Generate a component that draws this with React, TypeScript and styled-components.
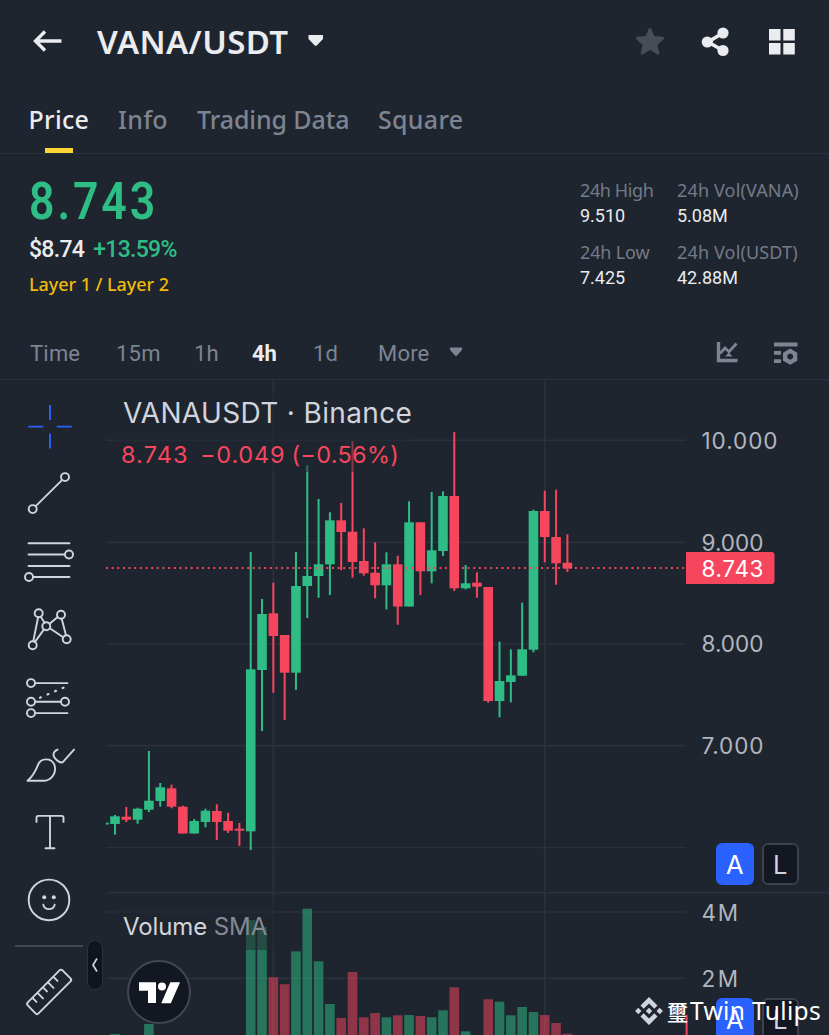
import React from "react";
import styled, { createGlobalStyle } from "styled-components";

const C = {
  bg: "#1f252f",
  line: "#2b313c",
  text: "#eaecef",
  muted: "#7d8492",
  dim: "#747a87",
  axis: "#b2b5be",
  green: "#2ebd85",
  red: "#f6465d",
  yellow: "#fcd535",
  gold: "#f0b90b",
  blue: "#2962ff",
  dark: "#131722",
};

const Global = createGlobalStyle`
  * { box-sizing: border-box; }
  html, body { margin: 0; background: ${C.bg}; }
  body { overflow: hidden; }
`;

const Screen = styled.div`
  position: relative;
  width: 829px;
  height: 1035px;
  overflow: hidden;
  display: flex;
  flex-direction: column;
  background: ${C.bg};
  color: ${C.text};
  font-family: "Noto Sans", sans-serif;
  white-space: nowrap;
`;

const Header = styled.header`
  height: 84px;
  padding: 0 32px;
  display: flex;
  align-items: center;
`;

const Pair = styled.h1`
  margin: 0 19px 0 34px;
  width: 192px;
  font-size: 33px;
  line-height: 82px;
  font-weight: 600;
  letter-spacing: 0.4px;
`;

const HeaderActions = styled.div`
  margin-left: auto;
  display: flex;
  align-items: center;
  gap: 37px;
`;

const Tabs = styled.nav`
  height: 70px;
  padding-left: 28.5px;
  display: flex;
  gap: 29px;
  border-bottom: 1px solid ${C.line};
`;

const Tab = styled.div<{ $active?: boolean; $w: number; $ls: number }>`
  width: ${(p) => p.$w}px;
  display: flex;
  flex-direction: column;
  justify-content: space-between;
  font-size: 25px;
  line-height: 70px;
  height: 70px;
  font-weight: 500;
  letter-spacing: ${(p) => p.$ls}px;
  color: ${(p) => (p.$active ? C.text : C.muted)};
  &::after {
    content: "";
    flex: none;
    width: 28px;
    height: 5px;
    margin: -6px auto 0;
    position: relative;
    top: -1px;
    background: ${(p) => (p.$active ? C.yellow : "transparent")};
  }
`;

const Summary = styled.section`
  height: 173px;
  padding: 19px 29px 0;
  display: flex;
  justify-content: space-between;
`;

const BigPrice = styled.div`
  font: 600 52.5px/57px Roboto, sans-serif;
  letter-spacing: 3.4px;
  color: ${C.green};
  transform: scaleX(0.85);
  transform-origin: left;
`;

const Change = styled.div`
  margin-top: 4px;
  display: flex;
  gap: 9px;
  font: 500 23px/32px Roboto, sans-serif;
  letter-spacing: -0.7px;
`;

const Up = styled.span`
  color: ${C.green};
`;

const Category = styled.div`
  margin-top: 2px;
  font-size: 18px;
  line-height: 32px;
  font-weight: 500;
  letter-spacing: -0.06px;
  color: ${C.gold};
`;

const Stats = styled.dl`
  margin: 4px 0 0;
  width: 220px;
  display: grid;
  grid-template-columns: 97px 123px;
  grid-auto-rows: 62.4px;
`;

const StatLabel = styled.dt<{ $ls?: number }>`
  font-size: 18px;
  line-height: 26px;
  letter-spacing: ${(p) => p.$ls ?? 0}px;
  color: ${C.dim};
`;

const StatValue = styled.dd`
  margin: 0;
  font: 400 18px/26.5px Roboto, sans-serif;
  color: ${C.text};
`;

const Intervals = styled.div`
  height: 53px;
  padding: 0 31px 0 30px;
  display: flex;
  align-items: center;
  border-bottom: 1px solid ${C.line};
`;

const Interval = styled.span<{ $w: number; $active?: boolean }>`
  width: ${(p) => p.$w}px;
  padding-top: 1px;
  font: ${(p) => (p.$active ? 700 : 400)} 22px/52px Roboto, sans-serif;
  letter-spacing: ${(p) => (p.$active ? -0.2 : 0.2)}px;
  color: ${(p) => (p.$active ? C.text : C.muted)};
`;

const IntervalTools = styled.div`
  margin-left: auto;
  display: flex;
  gap: 35px;
  align-items: center;
`;

const ChartRow = styled.main`
  position: relative;
  flex: 1;
  display: flex;
`;

const Rail = styled.aside`
  width: 106px;
  padding-top: 12.5px;
  display: flex;
  flex-direction: column;
`;

const RailIcon = styled.svg`
  flex: none;
  width: 100px;
  height: 67.8px;
  fill: none;
  stroke: #d1d4dc;
  stroke-width: 1.9;
  stroke-linecap: round;
  stroke-linejoin: round;
`;

const RailDivider = styled.div`
  flex: none;
  width: 68px;
  height: 2px;
  margin: 10px 0 10px 15px;
  background: #434651;
`;

const ChartSvg = styled.svg`
  display: block;
  width: 723px;
  height: 655px;
  font-family: Inter, sans-serif;
`;

const Legend = styled.div<{ $top: number; $w: number; $h: number }>`
  position: absolute;
  left: 114px;
  top: ${(p) => p.$top}px;
  width: ${(p) => p.$w}px;
  height: ${(p) => p.$h}px;
  background: rgba(31, 37, 47, 0.5);
  font-family: Inter, sans-serif;
`;

const SymbolName = styled.div`
  padding-left: 9px;
  font-size: 28px;
  line-height: 42px;
  letter-spacing: 0.35px;
  color: #d1d4dc;
`;

const SymbolQuote = styled.div`
  padding-left: 7px;
  display: flex;
  font-size: 23.5px;
  line-height: 42px;
  color: ${C.red};
`;

const QuotePart = styled.span<{ $w: number; $ls: number }>`
  width: ${(p) => p.$w}px;
  letter-spacing: ${(p) => p.$ls}px;
`;

const VolumeName = styled.div`
  padding-left: 9px;
  font-size: 24px;
  line-height: 51px;
  letter-spacing: -0.1px;
  color: #d1d4dc;
`;

const Muted = styled.span`
  color: #868993;
`;

const ScaleButtons = styled.div<{ $top: number }>`
  position: absolute;
  left: 716px;
  top: ${(p) => p.$top}px;
  display: flex;
  gap: 8px;
`;

const ScaleButton = styled.div<{ $on?: boolean }>`
  width: 37.5px;
  height: 41.5px;
  border-radius: 6px;
  border: 2px solid ${(p) => (p.$on ? C.blue : "#3c404a")};
  background: ${(p) => (p.$on ? C.blue : C.dark)};
  color: ${(p) => (p.$on ? "#fff" : "#d1d4dc")};
  font: 400 25.5px/39px Inter, sans-serif;
  text-align: center;
`;

const CollapseHandle = styled.div`
  position: absolute;
  left: 87px;
  top: 560px;
  width: 16px;
  height: 50px;
  border-radius: 8px;
  border: 1px solid #2c313c;
  background: #10141e;
  display: flex;
  align-items: center;
  justify-content: center;
`;

const TvBadge = styled.svg`
  position: absolute;
  left: 127px;
  top: 580px;
  width: 64px;
  height: 64px;
`;

const Watermark = styled.div`
  position: absolute;
  left: 635px;
  top: 994px;
  height: 34px;
  display: flex;
  align-items: center;
  font-size: 24.5px;
  line-height: 34px;
  letter-spacing: 0.35px;
  color: #fff;
`;

const Seal = styled.span`
  width: 23px;
  margin-left: 4px;
  font: 500 21px/38px "Noto Sans CJK TC", sans-serif;
`;

/* direction, high, body top, body bottom, low, volume top */
type Candle = ["u" | "d", number, number, number, number, number?];
const candles: Candle[] = [
  ["u", 815, 816.3, 824, 834.7, 1034],
  ["d", 807, 816.7, 819.7, 822],
  ["u", 807.7, 808.7, 819.7, 823.7],
  ["u", 751, 800.7, 809.7, 812, 1024],
  ["u", 783, 787.3, 801, 806.7],
  ["d", 784.7, 788.3, 806.7, 808.3],
  ["d", 805.7, 806.7, 833.5, 833.5],
  ["u", 819, 821, 833.5, 833.5],
  ["u", 808.7, 810.7, 822, 827.3],
  ["d", 804.3, 811, 822, 840],
  ["d", 812.7, 821, 830.7, 833],
  ["d", 823, 828.7, 830.7, 846],
  ["u", 552, 669.3, 831.3, 850, 920],
  ["u", 599, 614, 670, 731, 926.7],
  ["d", 582.7, 613.3, 636, 692.7, 977.3],
  ["d", 635, 635, 672.7, 720, 984.3],
  ["u", 552, 586, 672.7, 690, 951.3],
  ["u", 465.3, 576, 586, 618, 908.7],
  ["u", 499, 564.3, 576, 597.7, 961.3],
  ["u", 512.3, 520.3, 564.3, 595, 1004],
  ["d", 503, 520.3, 532, 570, 1018],
  ["d", 441.3, 531.7, 562, 577.7, 972],
  ["d", 528.3, 561, 573.3, 575.7, 1017.3],
  ["d", 542.3, 572.7, 585.3, 598.3, 1013],
  ["u", 552.3, 564.3, 585.3, 609.3, 1017.3],
  ["d", 555.7, 564.3, 606.5, 624.7, 1015.3],
  ["u", 501.3, 522.3, 606.5, 606.5, 1015],
  ["d", 522.3, 522.3, 571.3, 595, 1016],
  ["u", 492, 550.3, 571.3, 583.3, 1017.3],
  ["u", 491.3, 496, 551, 556, 1010.3],
  ["d", 432, 496, 588.3, 591, 987.3],
  ["u", 565, 583.3, 588.3, 589.3, 1031.3],
  ["d", 572.3, 582.7, 586.7, 597.7],
  ["d", 587, 587, 701, 702.7, 999.3],
  ["u", 641.7, 681, 701, 717.3, 1001.7],
  ["u", 649.3, 675.3, 682, 702.3, 1015.3],
  ["u", 602.7, 649.3, 675.7, 675.7, 1007],
  ["u", 509.7, 511, 649.7, 652.3, 1012],
  ["d", 490.7, 511, 537, 562.3, 1015],
  ["d", 489.7, 537, 563.3, 584.7, 1023],
  ["d", 534.3, 562.7, 568.3, 572, 1033.7],
];

const priceLabels: [string, number, number][] = [
  ["10.000", 440.5, 76],
  ["9.000", 542.5, 62],
  ["8.000", 644.2, 62],
  ["7.000", 746, 62],
];

const volumeLabels: [string, number][] = [
  ["4", 912.3],
  ["2", 978.8],
];

function Chart() {
  return (
    <ChartSvg viewBox="106 380 723 655">
      <g stroke={C.line} strokeWidth="1.7">
        {[440.4, 542.3, 644, 745.7, 847.5, 912, 978.4].map((y) => (
          <line key={y} x1="105" x2="686" y1={y} y2={y} />
        ))}
        <line x1="105" x2="829" y1="892.6" y2="892.6" />
        <line x1="273.4" x2="273.4" y1="380" y2="1035" />
        <line x1="544.7" x2="544.7" y1="380" y2="1035" />
      </g>
      <rect x="100" y="822.6" width="8.6" height="2" fill={C.green} />
      {candles.map(([dir, high, top, bottom, low, volume], i) => {
        const x = 115 + i * 11.31;
        const color = dir === "u" ? C.green : C.red;
        return (
          <g key={i} fill={color}>
            {volume && <rect x={x - 4.8} y={volume} width="9.6" height={1036 - volume} opacity="0.52" />}
            <rect x={x - 1} y={high} width="2" height={low - high} />
            <rect x={x - 4.8} y={top} width="9.6" height={bottom - top} />
          </g>
        );
      })}
      <line x1="106" x2="686" y1="568" y2="568" stroke={C.red} strokeWidth="1.9" strokeDasharray="1.9 3.75" />
      <g fill={C.axis} fontSize="22.5">
        {priceLabels.map(([label, y, w]) => (
          <text key={label} x="701.5" y={y + 8.2} textLength={w}>
            {label}
          </text>
        ))}
        {volumeLabels.map(([label, y]) => (
          <text key={label} y={y + 8.2}>
            <tspan x="701.5">{label}</tspan>
            <tspan x="717.8">M</tspan>
          </text>
        ))}
      </g>
      <path d="M686 552h85.5q3 0 3 3v26q0 3-3 3H686z" fill={C.red} />
      <text x="701.5" y="576.7" textLength="62" fontSize="22.5" fill="#fff">
        8.743
      </text>
      <rect x="685.6" y="1015" width="2" height="20" fill={C.red} />
    </ChartSvg>
  );
}

const railView = "-50 -33.9 100 67.8";

function Tools() {
  return (
    <Rail>
      <RailIcon viewBox={railView} style={{ stroke: C.blue }}>
        <path strokeLinecap="butt" d="M0-22v15M0 6.500v15M-21.700-.3h15M6.700-.3h15" />
      </RailIcon>
      <RailIcon viewBox={railView}>
        <circle cx="15" cy="-16.8" r="4" />
        <circle cx="-17.3" cy="15.2" r="4" />
        <path d="M12-13.8-14.3 12.2" />
      </RailIcon>
      <RailIcon viewBox={railView}>
        <path d="M-21.5-18.6h41M-21.5-7.4h36M-21.5 4.1h41M-17 15.1h36.5" />
        <circle cx="19" cy="-7.4" r="4" />
        <circle cx="-21" cy="15.1" r="4" />
      </RailIcon>
      <RailIcon viewBox={railView}>
        <path d="M-11.9-12.7-16.7 11.3M-9.2-13.2-5.6-7.3M-6-.5-15 12M-.4-6.1 7.7-12.9M11.7-11.2 16 5.3M-.2-1.7 13.2 7.3" />
        <circle cx="-11.3" cy="-16.7" r="4" />
        <circle cx="11" cy="-15.2" r="4" />
        <circle cx="-3.7" cy="-3.7" r="4" />
        <circle cx="16.7" cy="9.3" r="4" />
        <circle cx="-17.3" cy="15.3" r="4" />
      </RailIcon>
      <RailIcon viewBox={railView}>
        <path d="M-15-14.8h32.5M-15 3.8h26M-15 15.2h32.5" />
        <path d="M-10-.2 16-11.3" strokeWidth="2.2" strokeDasharray="1 7.2" />
        <circle cx="-19" cy="-14.8" r="4" />
        <circle cx="-19" cy="3.8" r="4" />
        <circle cx="15" cy="3.8" r="4" />
        <circle cx="-19" cy="15.2" r="4" />
      </RailIcon>
      <RailIcon viewBox={railView}>
        <path d="M-22.5 15.9C-17 11.5-14.5 6-12.6 1.5-10-7.5 1-7.5 4.2-.5 7.2 7 2 15.9-7 15.9Z" />
        <path d="M7.5-15.3C3-13.5 2.3-9.5 5.3-6.2 8-3 10.5-1 13.5-3.5L24-15.3" />
      </RailIcon>
      <RailIcon viewBox={railView}>
        <path d="M-13.5-11v-4.2q0-1.8 1.8-1.8H11.7q1.8 0 1.8 1.8V-11M0-17V15.3M-4.5 15.3h9" />
      </RailIcon>
      <RailIcon viewBox={railView}>
        <circle cx="-1" cy="-1" r="20.3" />
        <path d="M-6.7 3.7C-5.5 9.7 3.5 9.7 4.7 3.7" />
        <g fill="#d1d4dc" stroke="none">
          <circle cx="-5.8" cy="-3.7" r="2" />
          <circle cx="3.8" cy="-3.7" r="2" />
        </g>
      </RailIcon>
      <RailDivider />
      <RailIcon viewBox={railView}>
        <path d="M-22.2 11.5 9.5-20.5q1.5-1.5 3 0l8 8q1.5 1.5 0 3L-11.5 22.5q-1.500 1.500-3 0l-7.700-8q-1.500-1.500 0-3ZM-17.500 7l4 4M-12.500 2l5.500 5.500M-7-3.500l4 4M-2-8.500l5.500 5.500M3.500-14l4 4" />
      </RailIcon>
    </Rail>
  );
}

export default function App() {
  return (
    <Screen>
      <Global />
      <Header>
        <svg width="31" height="26" viewBox="0 0 31 26" fill="none" stroke={C.text} strokeWidth="3.4">
          <path d="M29.5 12H3.5M13 2.5 3.5 12 13 21.5" />
        </svg>
        <Pair>VANA/USDT</Pair>
        <svg width="16" height="14" viewBox="0 0 16 14" fill={C.text}>
          <path d="M.5 0h14.5v4L9 10.3q-1.3 1-2.5 0L.5 4z" />
        </svg>
        <HeaderActions>
          <svg width="28" height="30" viewBox="1 0 28 30" fill="#474d57" stroke="#474d57" strokeWidth="3" strokeLinejoin="round">
            <path d="M15 2.5 18.5 10.5 27.5 11.3 20.7 17.3 22.8 26 15 21.3 7.2 26 9.3 17.3 2.5 11.3 11.5 10.5Z" />
          </svg>
          <svg width="29" height="30" viewBox="0 0 29 30" fill={C.text} stroke={C.text}>
            <path d="M22 6 7 15 22 23.5" fill="none" strokeWidth="3.6" />
            <g stroke="none">
              <circle cx="22" cy="6" r="5.6" />
              <circle cx="6.3" cy="15" r="5.6" />
              <circle cx="22" cy="23.5" r="5.6" />
            </g>
          </svg>
          <svg width="30" height="30" viewBox="0 0 30 30" fill={C.text}>
            <path d="M2 2h11.5v11.5H2zM16.3 2h11.5v11.5H16.3zM2 16h11.5v11.5H2zM16.3 16h11.5v11.5H16.3z" />
          </svg>
        </HeaderActions>
      </Header>
      <Tabs>
        <Tab $active $w={60.5} $ls={0.3}>Price</Tab>
        <Tab $w={50} $ls={0.3}>Info</Tab>
        <Tab $w={152} $ls={-0.1}>Trading Data</Tab>
        <Tab $w={85} $ls={0.3}>Square</Tab>
      </Tabs>
      <Summary>
        <div>
          <BigPrice>8.743</BigPrice>
          <Change>
            <span>$8.74</span>
            <Up>+13.59%</Up>
          </Change>
          <Category>Layer 1 / Layer 2</Category>
        </div>
        <Stats>
          <div>
            <StatLabel $ls={-0.4}>24h High</StatLabel>
            <StatValue>9.510</StatValue>
          </div>
          <div>
            <StatLabel $ls={0.15}>24h Vol(VANA)</StatLabel>
            <StatValue>5.08M</StatValue>
          </div>
          <div>
            <StatLabel $ls={-0.15}>24h Low</StatLabel>
            <StatValue>7.425</StatValue>
          </div>
          <div>
            <StatLabel $ls={0.15}>24h Vol(USDT)</StatLabel>
            <StatValue>42.88M</StatValue>
          </div>
        </Stats>
      </Summary>
      <Intervals>
        <Interval $w={86}>Time</Interval>
        <Interval $w={78}>15m</Interval>
        <Interval $w={58}>1h</Interval>
        <Interval $w={61} $active>4h</Interval>
        <Interval $w={65}>1d</Interval>
        <Interval $w={71}>More</Interval>
        <svg width="14" height="12" viewBox="0 0 14 12" fill={C.muted}>
          <path d="M1 .5h12v2.5L8 8.5q-1 1-2 0L1 3z" />
        </svg>
        <IntervalTools>
          <svg width="22" height="24" viewBox="0 0 22 24" fill="none" stroke={C.muted} strokeWidth="3.4">
            <path d="M2.5 1v18.5H21.5" />
            <path d="M4 12.5l5-5.5 4 3.8 7.5-8.3" strokeWidth="2.8" />
            <path d="M9 15.5h7.5l-3.7-4z" fill={C.muted} stroke="none" />
          </svg>
          <svg width="25" height="24" viewBox="0 0 25 24" fill={C.muted}>
            <path d="M1 1.5h23.5v4H1zM1 10h7v3.7H1zM1 18.3h7v3.7H1z" />
            <path fillRule="evenodd" d="M17.2 7.6 24.3 11.7v8L17.2 23.7 10 19.7v-8zM17.2 12.6a3 3 0 1 0 .01 0z" />
          </svg>
        </IntervalTools>
      </Intervals>
      <ChartRow>
        <Tools />
        <Chart />
        <Legend $top={12} $w={297} $h={80}>
          <SymbolName>VANAUSDT · Binance</SymbolName>
          <SymbolQuote>
            <QuotePart $w={79} $ls={1.1}>8.743</QuotePart>
            <QuotePart $w={91.5} $ls={0.8}>−0.049</QuotePart>
            <QuotePart $w={107} $ls={0.3}>(−0.56%)</QuotePart>
          </SymbolQuote>
        </Legend>
        <Legend $top={521} $w={161} $h={49}>
          <VolumeName>
            Volume <Muted>SMA</Muted>
          </VolumeName>
        </Legend>
        <ScaleButtons $top={463}>
          <ScaleButton $on>A</ScaleButton>
          <ScaleButton>L</ScaleButton>
        </ScaleButtons>
        <ScaleButtons $top={618}>
          <ScaleButton $on>A</ScaleButton>
          <ScaleButton>L</ScaleButton>
        </ScaleButtons>
        <CollapseHandle>
          <svg width="8" height="16" viewBox="0 0 8 16" fill="none" stroke="#d1d4dc" strokeWidth="1.7">
            <path d="M6 1.5 2 8l4 6.5" />
          </svg>
        </CollapseHandle>
        <TvBadge viewBox="127 960 64 64">
          <circle cx="159" cy="992" r="31" fill={C.dark} stroke="#434651" strokeWidth="2" />
          <g fill="#fff">
            <path d="M139 982.3h17V1003h-8v-12.3h-9z" />
            <circle cx="162" cy="986.4" r="4" />
            <path d="M170.3 982.3H180l-9.2 20.9h-9.5z" />
          </g>
        </TvBadge>
      </ChartRow>
      <Watermark>
        <svg width="28" height="28" viewBox="-14 -14 28 28" fill="#d1d4dc">
          <path d="M0-14 8.5-5.5 5.3-2.3 0-7.6-5.3-2.3-8.5-5.5ZM0 14 8.5 5.5 5.3 2.3 0 7.6-5.3 2.3-8.5 5.5ZM0-3.2 3.2 0 0 3.2-3.2 0ZM-10.7-3.2-7.5 0-10.7 3.2-13.9 0ZM10.7-3.2 13.9 0 10.7 3.2 7.5 0Z" />
        </svg>
        <Seal>璽</Seal>
        <span>Twin Tulips</span>
      </Watermark>
    </Screen>
  );
}
